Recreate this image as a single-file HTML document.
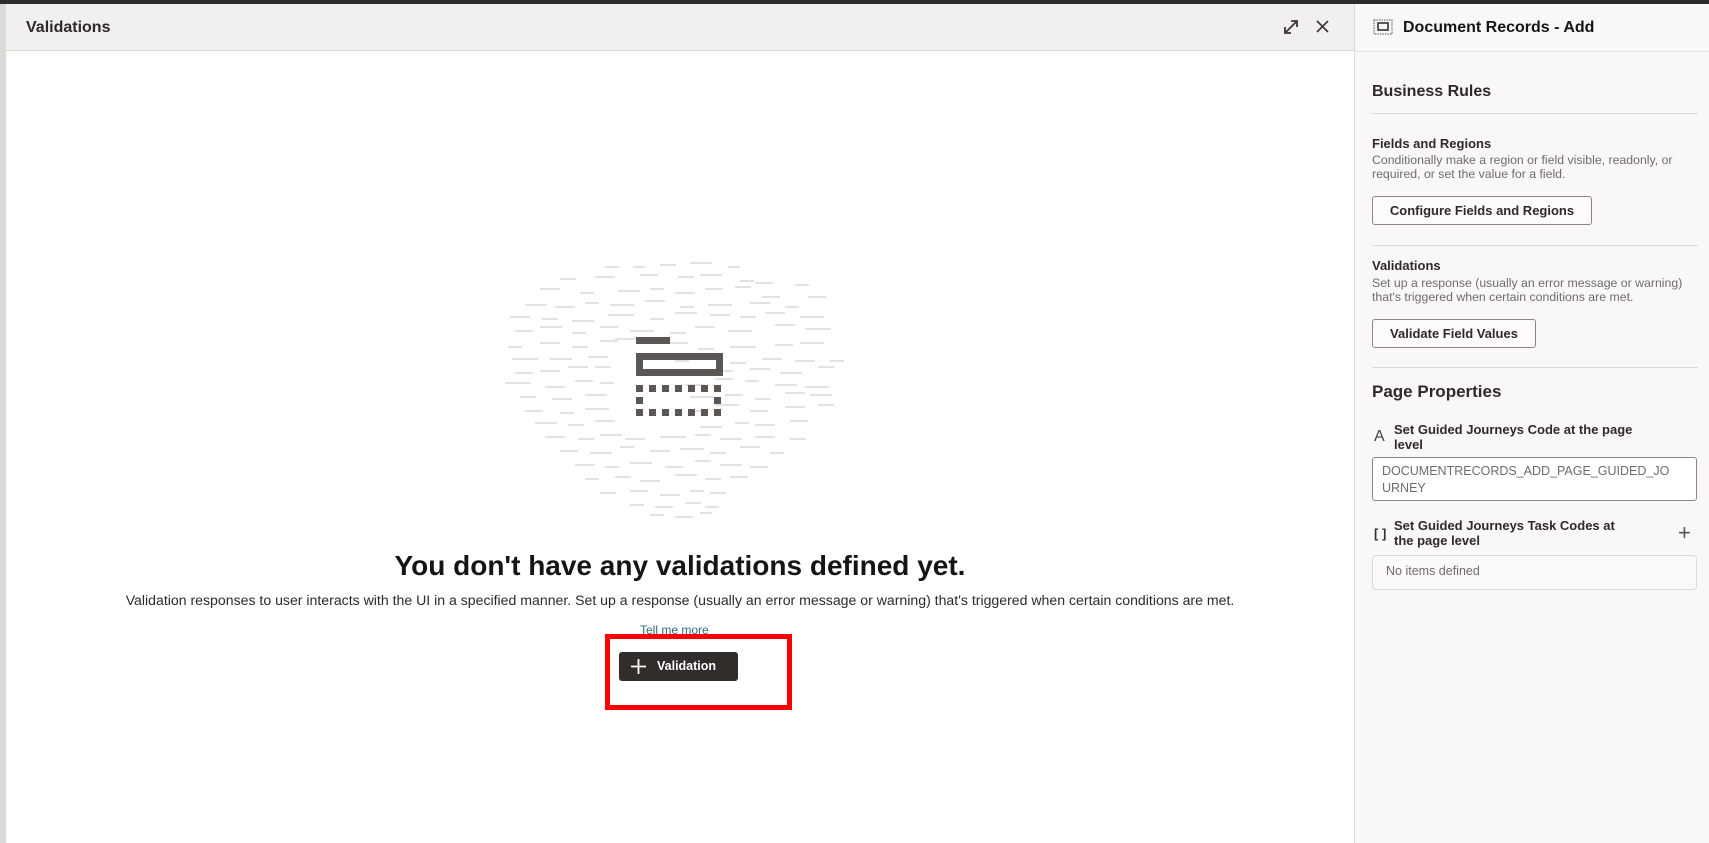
<!DOCTYPE html>
<html><head><meta charset="utf-8"><style>
*{margin:0;padding:0;box-sizing:border-box}
body{width:1709px;height:843px;overflow:hidden;background:#fff;font-family:"Liberation Sans",Arial,sans-serif;color:#161513;position:relative}
.a{position:absolute;white-space:nowrap}
.btn{position:absolute;border:1px solid #8a8784;border-radius:3px;background:#fcfbfa;font-weight:bold;font-size:13px;color:#2d2a28;text-align:center}
.hr{position:absolute;left:1372px;width:326px;height:1px;background:#dcdad7}
.desc{font-size:12.3px;color:#6f6c69;line-height:13.5px}
</style></head><body>
<div class="a" style="left:0;top:0;width:1709px;height:4px;background:#2e2c2a"></div>
<div class="a" style="left:0;top:4px;width:6px;height:839px;background:#dcdad7"></div>
<div class="a" style="left:6px;top:4px;width:1348px;height:47px;background:#f1f0ee;border-bottom:1px solid #d9d7d4"></div>
<div class="a" style="left:26px;top:19px;font-size:16px;font-weight:bold;color:#2d2a28">Validations</div>
<svg class="a" style="left:1282px;top:18px" width="18" height="18" viewBox="0 0 18 18" fill="none" stroke="#3a3633" stroke-width="1.8"><path d="M3 15L15 3M9 3h6v6M3 9v6h6"/></svg>
<svg class="a" style="left:1316px;top:20px" width="13" height="13" viewBox="0 0 13 13" stroke="#3a3633" stroke-width="1.6"><path d="M1 1L12 12M12 1L1 12"/></svg>
<div class="a" style="left:1354px;top:4px;width:1px;height:839px;background:#dcdad7"></div>
<div class="a" style="left:1355px;top:4px;width:354px;height:839px;background:#f9f8f6"></div>
<div class="a" style="left:1355px;top:51px;width:354px;height:1px;background:#e2e0dd"></div>
<svg class="a" style="left:1373px;top:19px" width="20" height="16" viewBox="0 0 20 16" fill="none"><rect x="1" y="1" width="18" height="14" stroke="#555" stroke-width="1" stroke-dasharray="1.5 1"/><rect x="5" y="4" width="10" height="7" stroke="#333" stroke-width="1.6"/></svg>
<div class="a" style="left:1403px;top:19px;font-size:16px;font-weight:bold">Document Records - Add</div>
<div class="a" style="left:1372px;top:83px;font-size:16px;font-weight:bold;color:#2d2a28">Business Rules</div>
<div class="hr" style="top:113px"></div>
<div class="a" style="left:1372px;top:136px;font-size:13px;font-weight:bold;color:#2d2a28">Fields and Regions</div>
<div class="a desc" style="left:1372px;top:154px">Conditionally make a region or field visible, readonly, or<br>required, or set the value for a field.</div>
<div class="btn" style="left:1372px;top:196px;width:220px;height:29px;line-height:27px">Configure Fields and Regions</div>
<div class="hr" style="top:245px"></div>
<div class="a" style="left:1372px;top:258px;font-size:13px;font-weight:bold;color:#2d2a28">Validations</div>
<div class="a desc" style="left:1372px;top:277px">Set up a response (usually an error message or warning)<br>that's triggered when certain conditions are met.</div>
<div class="btn" style="left:1372px;top:319px;width:164px;height:29px;line-height:27px">Validate Field Values</div>
<div class="hr" style="top:367px"></div>
<div class="a" style="left:1372px;top:382px;font-size:17px;font-weight:bold;color:#2d2a28">Page Properties</div>
<div class="a" style="left:1374px;top:428px;font-size:16px;color:#444">A</div>
<div class="a" style="left:1394px;top:422px;font-size:13px;font-weight:bold;line-height:15px;color:#2d2a28">Set Guided Journeys Code at the page<br>level</div>
<div class="a" style="left:1372px;top:457px;width:325px;height:44px;border:1px solid #8a8784;border-radius:3px;background:#fff"></div>
<div class="a" style="left:1382px;top:463px;font-size:12.5px;line-height:17px;color:#6f6c69">DOCUMENTRECORDS_ADD_PAGE_GUIDED_JO<br>URNEY</div>
<div class="a" style="left:1374px;top:526px;font-size:13px;font-weight:bold;color:#333">[ ]</div>
<div class="a" style="left:1394px;top:518px;font-size:13px;font-weight:bold;line-height:15px;color:#2d2a28">Set Guided Journeys Task Codes at<br>the page level</div>
<div class="a" style="left:1678px;top:520px;font-size:22px;color:#555;font-weight:300">+</div>
<div class="a" style="left:1372px;top:555px;width:325px;height:35px;border:1px solid #dcdad7;border-radius:4px;background:#fbfaf9"></div>
<div class="a" style="left:1386px;top:564px;font-size:12.5px;color:#6f6c69">No items defined</div>

<svg class="a" style="left:500px;top:255px" width="360" height="265" viewBox="0 0 360 265" stroke="#d3d1ce" stroke-width="1.2">
<g>
<path d="M105 12h14M133 12h12M160 10h16M190 8h22M228 12h12"/>
<path d="M60 24h16M95 22h20M140 20h18M178 22h16M200 20h22M240 26h14M255 28h18"/>
<path d="M40 34h20M80 38h14M118 36h22M150 34h14M175 38h20M205 34h18M235 32h16M262 42h18M295 30h14"/>
<path d="M25 50h22M55 52h20M85 48h14M110 50h24M145 46h20M180 52h14M208 50h24M250 48h20M285 52h14M308 42h18"/>
<path d="M10 62h20M42 64h16M72 66h22M108 60h26M150 64h14M175 58h22M210 60h20M240 62h16M265 58h20M300 62h24"/>
<path d="M15 76h18M40 72h22M72 78h14M100 72h18M130 76h24M170 78h16M195 72h20M228 76h24M275 70h20M305 74h26"/>
<path d="M8 92h14M40 88h20M72 92h16M100 86h18M115 84h24M168 88h20M198 94h16M230 92h26M275 90h18M300 88h24"/>
<path d="M12 104h26M50 104h22M88 102h20M175 106h14M200 104h18M230 108h16M262 104h20M295 106h20M330 106h14"/>
<path d="M15 118h18M40 116h20M68 112h20M95 112h16M185 118h22M215 116h18M250 114h20M280 118h22M318 112h16"/>
<path d="M5 128h26M45 132h20M75 126h18M100 128h14M185 130h20M215 124h18M245 126h14M275 130h22M305 132h24"/>
<path d="M20 142h16M52 144h20M85 140h22M190 142h24M225 140h18M255 144h16M285 138h20M310 140h22"/>
<path d="M25 156h18M60 158h14M85 154h24M190 156h16M215 150h24M250 156h18M285 152h20M318 150h16"/>
<path d="M35 168h22M68 170h16M95 166h20M200 172h22M235 168h14M255 170h20M290 166h18"/>
<path d="M45 182h20M78 184h16M100 180h22M125 184h20M160 182h26M195 180h16M220 184h22M255 182h20M290 184h16"/>
<path d="M60 196h18M90 198h22M120 192h14M150 196h20M180 194h24M210 198h16M240 192h20M270 198h14"/>
<path d="M75 210h20M105 212h14M130 208h22M165 212h18M195 206h16M220 210h22M250 212h18"/>
<path d="M85 224h14M115 222h16M140 226h20M175 220h22M205 224h16M230 222h18"/>
<path d="M100 238h16M130 236h18M160 240h20M190 236h14M210 238h16"/>
<path d="M130 250h14M155 252h18M185 248h16M205 252h14"/>
<path d="M150 260h14M175 262h18M200 258h12"/>
</g></svg>
<svg class="a" style="left:636px;top:337px" width="88" height="80" viewBox="0 0 88 80" fill="#5a5755">
<rect x="0" y="0" width="34" height="7"/>
<rect x="3.5" y="19.5" width="80" height="16" fill="none" stroke="#5a5755" stroke-width="7"/>
<g><rect x="0" y="48" width="7" height="7"/><rect x="13" y="48" width="7" height="7"/><rect x="26" y="48" width="7" height="7"/><rect x="39" y="48" width="7" height="7"/><rect x="52" y="48" width="7" height="7"/><rect x="65" y="48" width="7" height="7"/><rect x="78" y="48" width="7" height="7"/>
<rect x="0" y="60" width="7" height="7"/><rect x="78" y="60" width="7" height="7"/>
<rect x="0" y="72" width="7" height="7"/><rect x="13" y="72" width="7" height="7"/><rect x="26" y="72" width="7" height="7"/><rect x="39" y="72" width="7" height="7"/><rect x="52" y="72" width="7" height="7"/><rect x="65" y="72" width="7" height="7"/><rect x="78" y="72" width="7" height="7"/></g>
</svg>

<div class="a" style="left:6px;width:1348px;top:550px;text-align:center;font-size:28px;font-weight:bold;color:#161513">You don't have any validations defined yet.</div>
<div class="a" style="left:6px;width:1348px;top:592px;text-align:center;font-size:14.1px;color:#2d2a28">Validation responses to user interacts with the UI in a specified manner. Set up a response (usually an error message or warning) that's triggered when certain conditions are met.</div>
<div class="a" style="left:640px;top:623px;font-size:12px;color:#2c6b7e;text-decoration:underline">Tell me more</div>
<div class="a" style="left:605px;top:634px;width:187px;height:76px;border:5px solid #f00"></div>
<div class="a" style="left:619px;top:652px;width:119px;height:29px;background:#312d2a;border-radius:3px"></div>
<svg class="a" style="left:631px;top:659px" width="15" height="15" viewBox="0 0 15 15" stroke="#fff" stroke-width="1.8"><path d="M7.5 0v15M0 7.5h15"/></svg>
<div class="a" style="left:657px;top:659px;font-size:12.5px;font-weight:bold;color:#fff">Validation</div>
</body></html>
